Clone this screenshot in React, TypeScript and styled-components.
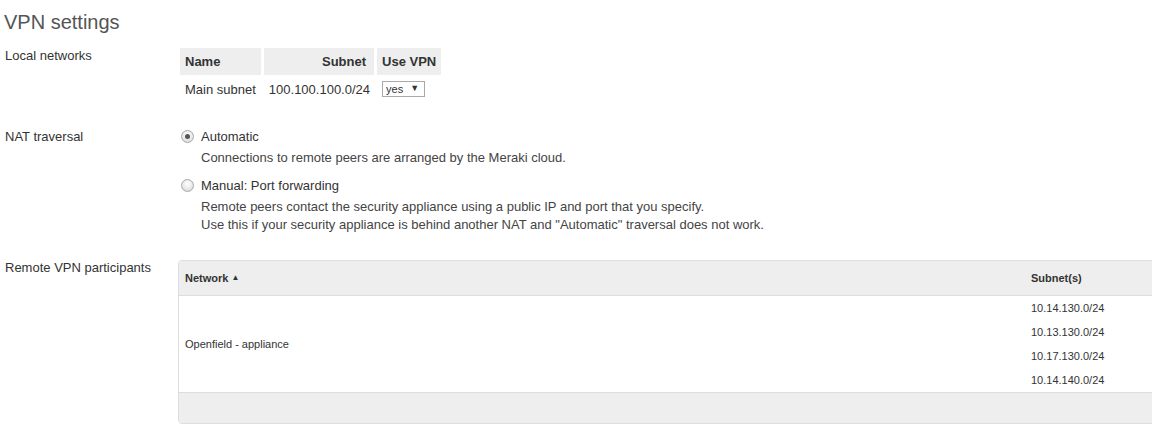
import React from 'react';
import styled, { createGlobalStyle } from 'styled-components';

const GlobalStyle = createGlobalStyle`
  html, body {
    margin: 0;
    padding: 0;
    background: #ffffff;
    overflow: hidden;
  }
  body {
    font-family: 'Liberation Sans', Arial, sans-serif;
    color: #333333;
  }
`;

const subnets = ['10.14.130.0/24', '10.13.130.0/24', '10.17.130.0/24', '10.14.140.0/24'];

export default function App() {
  return (
    <>
      <GlobalStyle />
      <Page>
        <Title>VPN settings</Title>

        <Section>
          <Label>Local networks</Label>
          <LocalTable>
            <thead>
              <tr>
                <LocalTh>Name</LocalTh>
                <LocalTh $align="right">Subnet</LocalTh>
                <LocalTh>Use VPN</LocalTh>
              </tr>
            </thead>
            <tbody>
              <tr>
                <LocalTd>Main subnet</LocalTd>
                <LocalTd $align="right">100.100.100.0/24</LocalTd>
                <LocalTd>
                  <SelectWrap>
                    <Select defaultValue="yes">
                      <option value="yes">yes</option>
                      <option value="no">no</option>
                    </Select>
                  </SelectWrap>
                </LocalTd>
              </tr>
            </tbody>
          </LocalTable>
        </Section>

        <Section $top={26}>
          <Label>NAT traversal</Label>
          <Options>
            <Option>
              <OptionHead>
                <Radio $checked />
                Automatic
              </OptionHead>
              <Description>Connections to remote peers are arranged by the Meraki cloud.</Description>
            </Option>
            <Option>
              <OptionHead>
                <Radio />
                Manual: Port forwarding
              </OptionHead>
              <Description>
                Remote peers contact the security appliance using a public IP and port that you specify.
                <br />
                Use this if your security appliance is behind another NAT and "Automatic" traversal does not work.
              </Description>
            </Option>
          </Options>
        </Section>

        <Section $top={26}>
          <Label>Remote VPN participants</Label>
          <RemoteBox>
            <RemoteTable>
              <thead>
                <tr>
                  <RemoteTh $width={834}>
                    Network <SortArrow>▲</SortArrow>
                  </RemoteTh>
                  <RemoteTh>Subnet(s)</RemoteTh>
                </tr>
              </thead>
              <tbody>
                <tr>
                  <RemoteTd>Openfield - appliance</RemoteTd>
                  <RemoteTd>
                    {subnets.map((s) => (
                      <SubnetLine key={s}>{s}</SubnetLine>
                    ))}
                  </RemoteTd>
                </tr>
              </tbody>
            </RemoteTable>
            <RemoteFooter />
          </RemoteBox>
        </Section>
      </Page>
    </>
  );
}

const Page = styled.div`
  width: 1152px;
  height: 428px;
  padding: 10px 0 0 5px;
  box-sizing: border-box;
`;

const Title = styled.h1`
  margin: 0 0 14px -1px;
  font-size: 20px;
  font-weight: normal;
  line-height: 24px;
  color: #555555;
`;

const Section = styled.div<{ $top?: number }>`
  display: grid;
  grid-template-columns: 172px 1fr;
  align-items: start;
  justify-items: start;
  margin-top: ${(p) => p.$top ?? 0}px;
`;

const Label = styled.div`
  font-size: 13px;
  line-height: 16px;
`;

const LocalTable = styled.table`
  border-collapse: separate;
  border-spacing: 3px;
  margin-top: -3px;
  font-size: 13px;
`;

const LocalTh = styled.th<{ $align?: string }>`
  background: #eeeeee;
  height: 27px;
  padding: 0 ${(p) => (p.$align === 'right' ? 8 : 5)}px 0 5px;
  text-align: ${(p) => p.$align ?? 'left'};
  font-weight: bold;
  color: #333333;
  &:first-child {
    width: 70px;
  }
  &:nth-child(2) {
    width: 97px;
  }
`;

const LocalTd = styled.td<{ $align?: string }>`
  height: 22px;
  padding: 0 ${(p) => (p.$align === 'right' ? 4 : 5)}px 0 5px;
  text-align: ${(p) => p.$align ?? 'left'};
  white-space: nowrap;
  color: #333333;
`;

const SelectWrap = styled.span`
  position: relative;
  display: inline-block;
  &::after {
    content: '▼';
    position: absolute;
    right: 6px;
    top: 2px;
    font-size: 9px;
    color: #333333;
    pointer-events: none;
  }
`;

const Select = styled.select`
  appearance: none;
  width: 43px;
  height: 16px;
  padding: 0 0 0 3px;
  border: 1px solid #a9a9a9;
  border-radius: 0;
  background: #ffffff;
  font-family: 'Liberation Sans', Arial, sans-serif;
  font-size: 11px;
  color: #333333;
  vertical-align: middle;
`;

const Options = styled.div`
  display: flex;
  flex-direction: column;
  gap: 9px;
  margin-top: -2px;
  padding-left: 4px;
`;

const Option = styled.div`
  display: flex;
  flex-direction: column;
`;

const OptionHead = styled.label`
  display: flex;
  align-items: center;
  gap: 7px;
  height: 18px;
  font-size: 13px;
  color: #333333;
`;

const Radio = styled.span<{ $checked?: boolean }>`
  width: 11px;
  height: 11px;
  border-radius: 50%;
  border: 1px solid #a8a8a8;
  background: radial-gradient(circle at 50% 35%, #ffffff 0%, #e6e6e6 60%, #d0d0d0 100%);
  display: inline-flex;
  align-items: center;
  justify-content: center;
  &::after {
    content: '';
    width: 5px;
    height: 5px;
    border-radius: 50%;
    background: ${(p) => (p.$checked ? '#555555' : 'transparent')};
  }
`;

const Description = styled.div`
  margin-top: 4px;
  padding-left: 20px;
  font-size: 13px;
  line-height: 18px;
  color: #444444;
`;

const RemoteBox = styled.div`
  margin-left: 1px;
  width: 990px;
  border: 1px solid #dddddd;
  border-radius: 4px;
  overflow: hidden;
`;

const RemoteTable = styled.table`
  width: 100%;
  border-collapse: collapse;
  font-size: 11px;
`;

const RemoteTh = styled.th<{ $width?: number }>`
  width: ${(p) => (p.$width ? `${p.$width}px` : 'auto')};
  height: 34px;
  padding: 0 6px;
  text-align: left;
  font-weight: bold;
  color: #333333;
  background: #eeeeee;
  border-bottom: 1px solid #dddddd;
`;

const SortArrow = styled.span`
  font-size: 8px;
  vertical-align: 2px;
`;

const RemoteTd = styled.td`
  padding: 0 6px;
  vertical-align: middle;
  color: #333333;
  border-bottom: 1px solid #dddddd;
`;

const SubnetLine = styled.div`
  height: 24px;
  line-height: 24px;
`;

const RemoteFooter = styled.div`
  height: 30px;
  background: #eeeeee;
`;
